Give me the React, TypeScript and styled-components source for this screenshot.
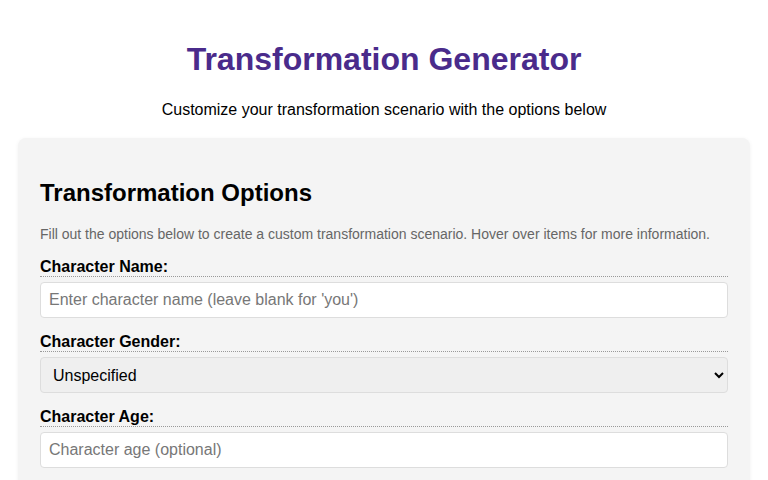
import React, { useState } from 'react'
import styled, { createGlobalStyle } from 'styled-components'

const GlobalStyle = createGlobalStyle`
  body {
    margin: 0;
    background-color: #fff;
    font-family: "Liberation Sans", Arial, sans-serif;
    color: #000;
  }
`

function App() {
  const [form, setForm] = useState({
    name: '',
    gender: 'unspecified',
    age: '',
  })

  const handleChange = (
    e: React.ChangeEvent<HTMLInputElement | HTMLSelectElement>
  ) => {
    setForm({ ...form, [e.target.id]: e.target.value })
  }

  return (
    <>
      <GlobalStyle />
      <Page>
        <Header>
          <Title>Transformation Generator</Title>
          <Subtitle>Customize your transformation scenario with the options below</Subtitle>
        </Header>
        <Card>
          <CardTitle>Transformation Options</CardTitle>
          <Description>
            Fill out the options below to create a custom transformation scenario. Hover over
            items for more information.
          </Description>
          <Field>
            <Label htmlFor="name" title="The name of the character being transformed">
              Character Name:
            </Label>
            <TextInput
              type="text"
              id="name"
              placeholder="Enter character name (leave blank for 'you')"
              value={form.name}
              onChange={handleChange}
            />
          </Field>
          <Field>
            <Label htmlFor="gender" title="The starting gender of the character">
              Character Gender:
            </Label>
            <Select id="gender" value={form.gender} onChange={handleChange}>
              <option value="unspecified">Unspecified</option>
              <option value="male">Male</option>
              <option value="female">Female</option>
              <option value="nonbinary">Non-binary</option>
            </Select>
          </Field>
          <Field>
            <Label htmlFor="age" title="The starting age of the character">
              Character Age:
            </Label>
            <TextInput
              type="text"
              id="age"
              placeholder="Character age (optional)"
              value={form.age}
              onChange={handleChange}
            />
          </Field>
        </Card>
      </Page>
    </>
  )
}

export default App

const Page = styled.div`
  padding: 0 18px 40px;
`

const Header = styled.header`
  padding-top: 41px;
  text-align: center;
`

const Title = styled.h1`
  margin: 0;
  font-size: 32px;
  line-height: 37px;
  font-weight: 700;
  color: #4a2b8b;
`

const Subtitle = styled.p`
  margin: 23px 0 0;
  font-size: 16px;
  line-height: 18px;
`

const Card = styled.section`
  margin-top: 19px;
  padding: 41px 22px 20px;
  border-radius: 8px;
  background-color: #f4f4f4;
  box-shadow: 0 1px 4px rgba(0, 0, 0, 0.06);
`

const CardTitle = styled.h2`
  margin: 0;
  font-size: 24px;
  line-height: 28px;
  font-weight: 700;
`

const Description = styled.p`
  margin: 19px 0 16px;
  font-size: 14px;
  line-height: 16px;
  color: #666;
`

const Field = styled.div`
  display: flex;
  flex-direction: column;
  gap: 5px;
  margin-bottom: 15px;
`

const Label = styled.label`
  display: block;
  border-bottom: 1px dotted #999;
  font-size: 16px;
  line-height: 18px;
  font-weight: 700;
  cursor: help;
`

const TextInput = styled.input`
  box-sizing: border-box;
  width: 100%;
  height: 36px;
  padding: 8px;
  border: 1px solid #ddd;
  border-radius: 4px;
  background-color: #fff;
  font-family: "Liberation Sans", Arial, sans-serif;
  font-size: 16px;
  color: #333;

  &::placeholder {
    color: #777;
  }

  &:focus {
    outline: none;
    border-color: #4a2b8b;
  }
`

const Select = styled.select`
  box-sizing: border-box;
  width: 100%;
  height: 36px;
  padding: 8px;
  border: 1px solid #ddd;
  border-radius: 4px;
  background-color: #efefef;
  font-family: "Liberation Sans", Arial, sans-serif;
  font-size: 16px;
  color: #000;
`
